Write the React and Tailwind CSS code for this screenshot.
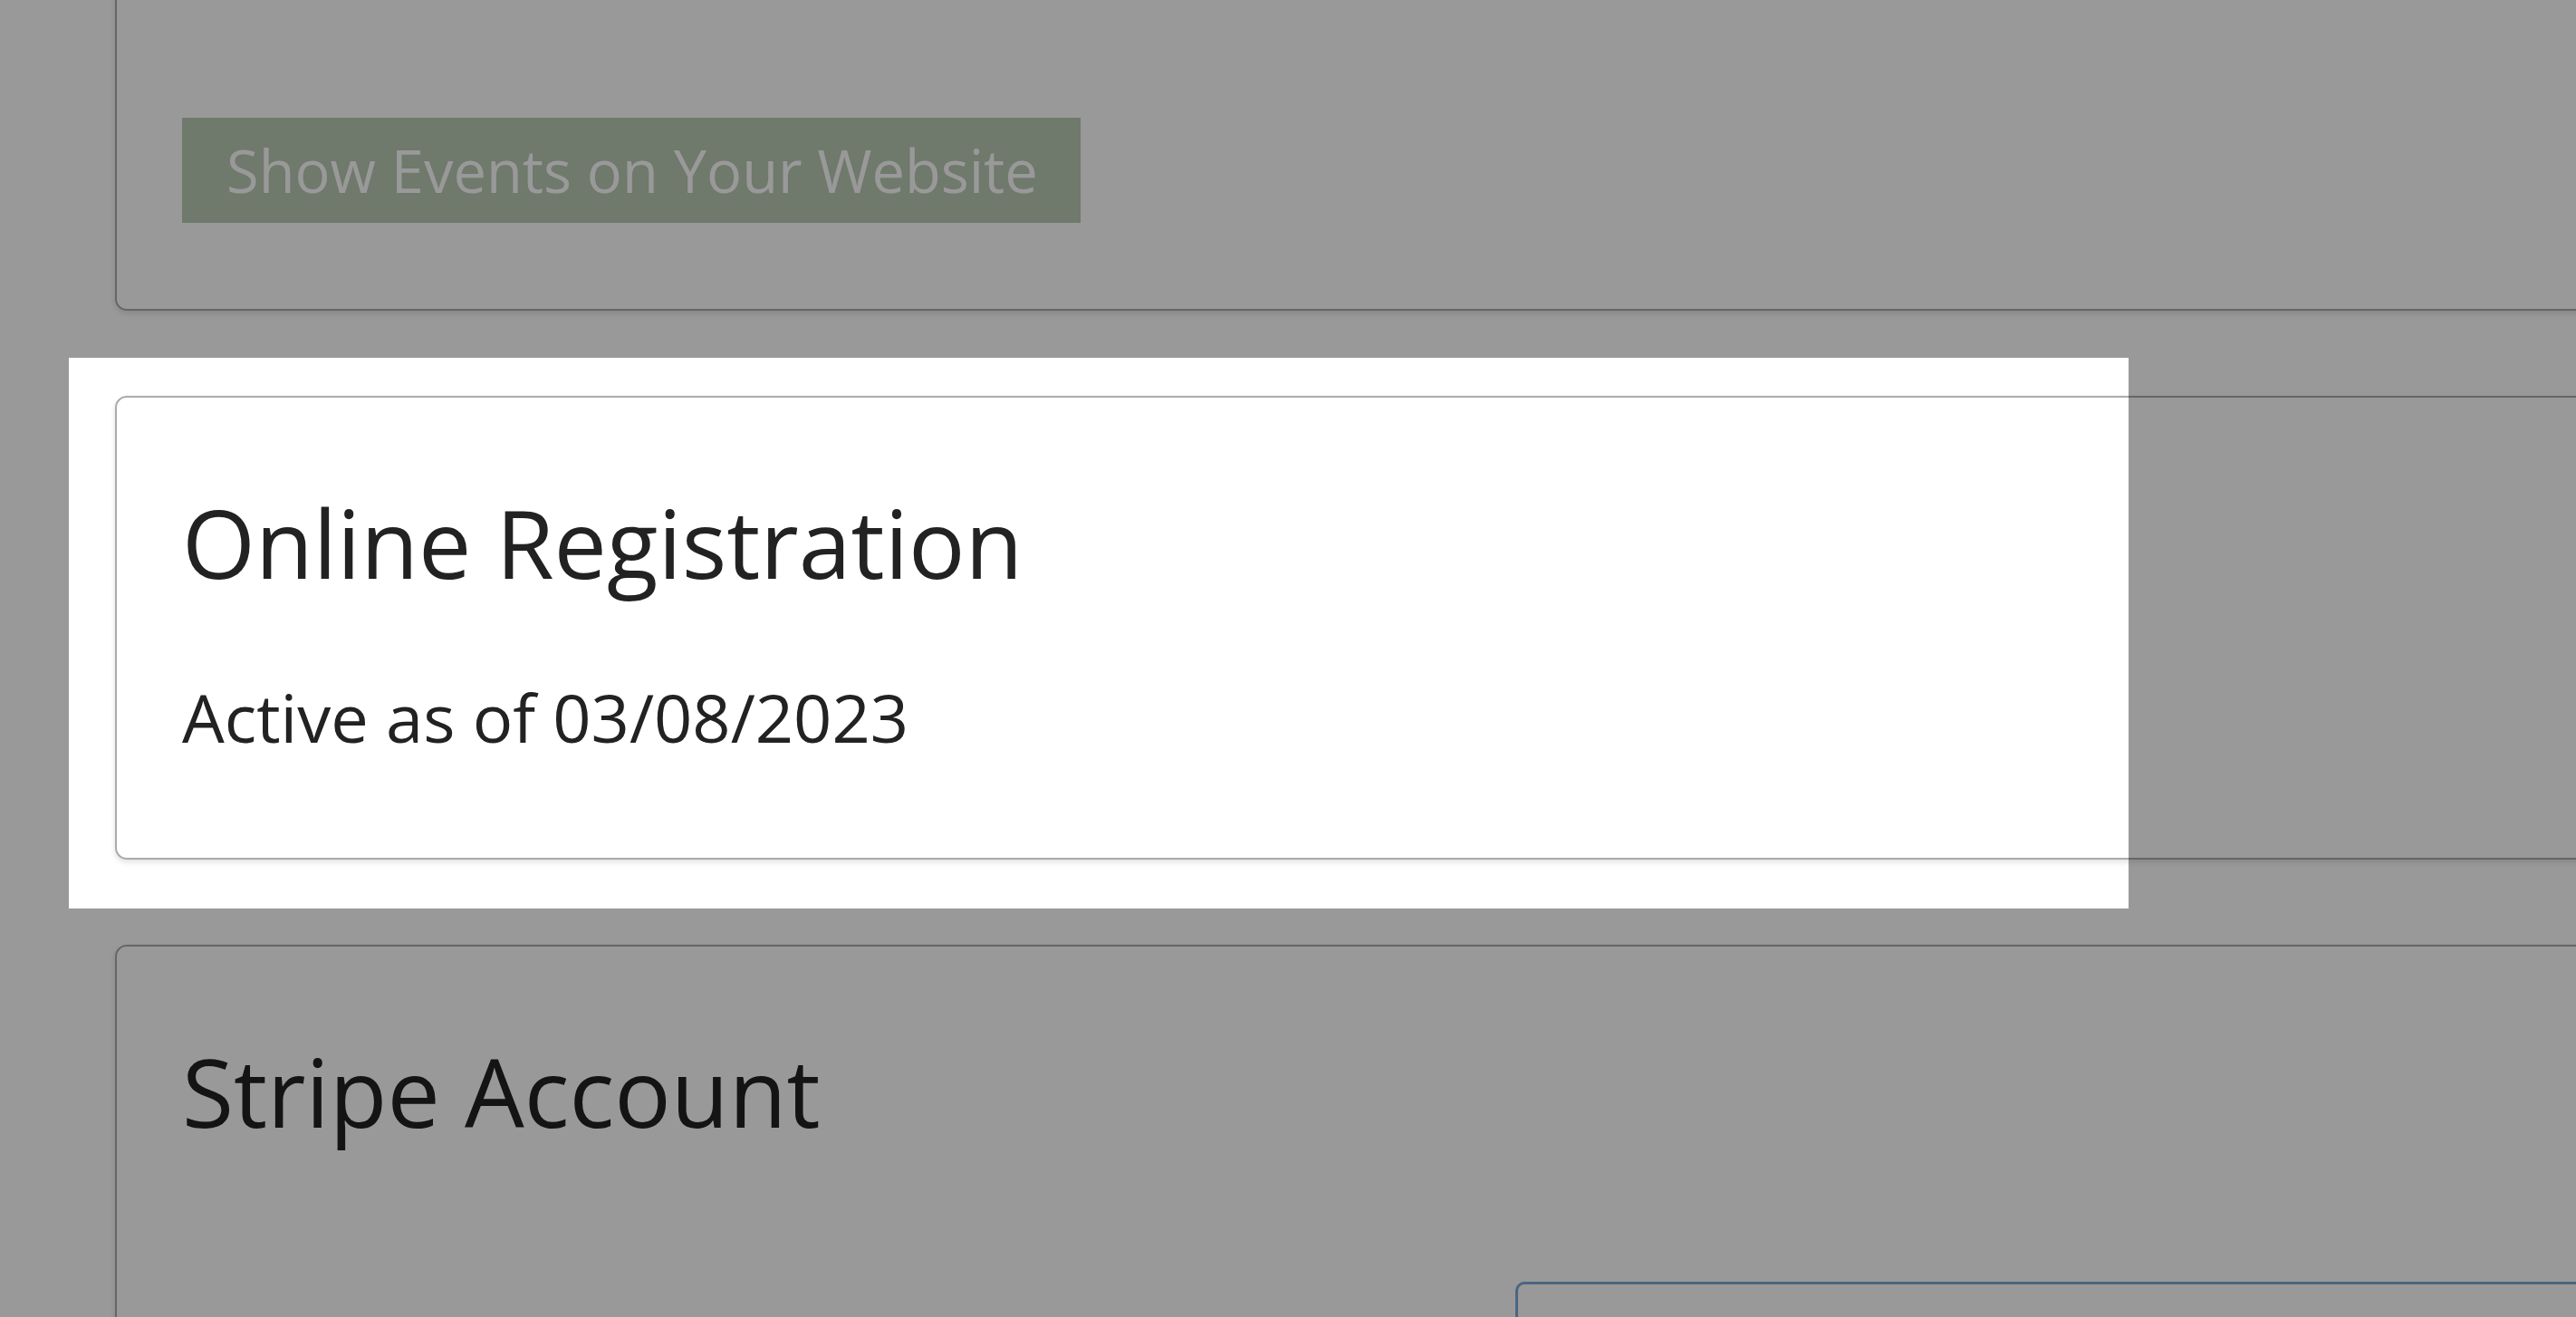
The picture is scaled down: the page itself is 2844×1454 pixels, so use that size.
const font = { fontFamily: '"Open Sans", "Noto Sans", sans-serif' };

function Card({ className = '', children }) {
  return (
    <div
      className={`w-[2800px] rounded-[13px] border-2 border-[#ababab] bg-white px-[72px] shadow-[0_3px_6px_rgba(0,0,0,0.12)] ${className}`}
    >
      {children}
    </div>
  );
}

function Heading({ children }) {
  return <h3 className="text-[104px] font-normal leading-[1.1] text-[#222]">{children}</h3>;
}

export default function App() {
  return (
    <div className="relative h-[1454px] w-full overflow-hidden bg-white" style={font}>
      <div className="flex flex-col gap-[94px] pl-[127px]">
        {/* events card, scrolled mostly out of view */}
        <Card className="-mt-[20px] pt-[148px] pb-[95px]">
          <button className="flex h-[116px] w-[992px] items-center bg-[#b9cab4] pl-[49px] text-[65px] leading-none text-white">
            Show Events on Your Website
          </button>
        </Card>

        <Card className="pt-[72px] pb-[72px]">
          <div className="pt-[31px] pb-[31px]">
            <Heading>Online Registration</Heading>
            <p className="mt-[84px] text-[74px] leading-[1.4] text-[#222]">Active as of 03/08/2023</p>
          </div>
        </Card>

        <Card className="pt-[72px] h-[600px]">
          <div className="pt-[31px]">
            <Heading>Stripe Account</Heading>
            <div className="mt-[153px] flex">
              <div className="w-[1472px] shrink-0" />
              <div className="h-[200px] flex-1 rounded-[10px] border-[3px] border-[#7caad6] bg-white" />
            </div>
          </div>
        </Card>
      </div>

      {/* tour spotlight */}
      <div className="pointer-events-none absolute left-[76px] top-[395px] h-[608px] w-[2274px] shadow-[0_0_0_5000px_rgba(0,0,0,0.4)]" />
    </div>
  );
}
